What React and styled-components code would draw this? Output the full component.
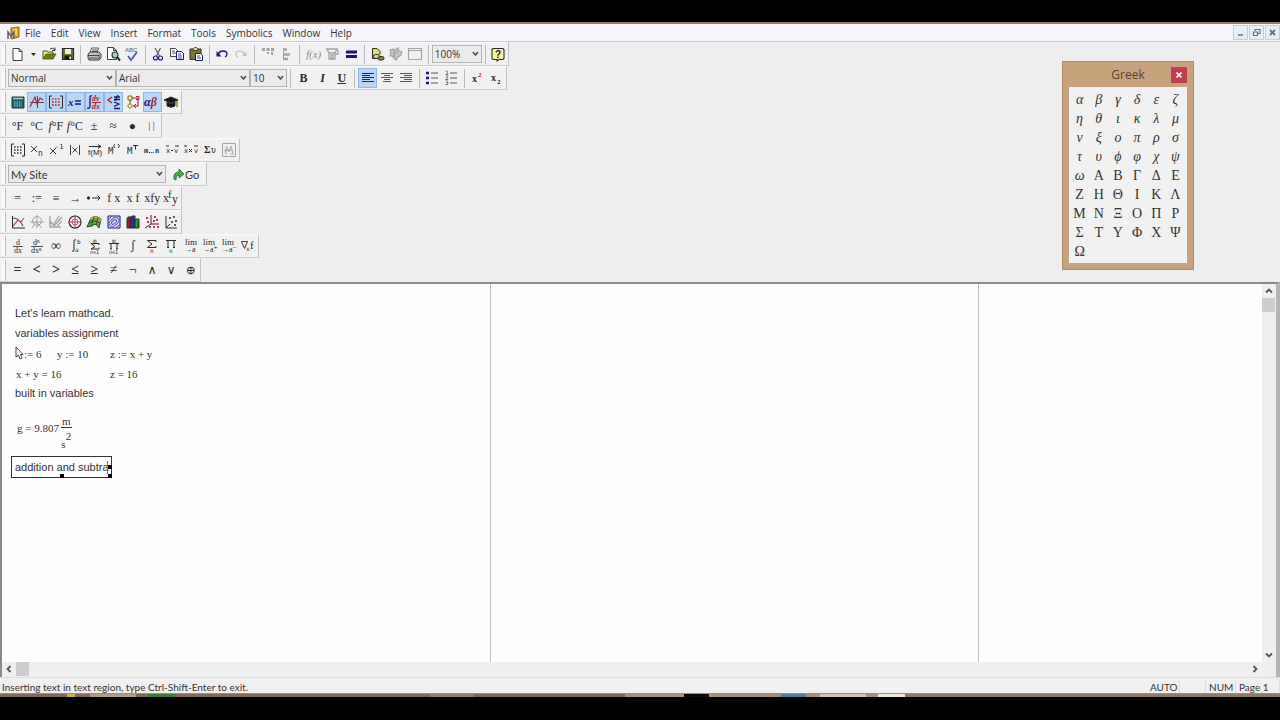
import React from "react";
import styled, { createGlobalStyle, css } from "styled-components";

const ui = `Lato, "Open Sans", sans-serif`;
const uiWide = `"Open Sans", "Noto Sans", sans-serif`;
const serif = `"Liberation Serif", "DejaVu Serif", serif`;
const sans = `"Liberation Sans", Arial, sans-serif`;
const mono = `"DejaVu Sans Mono", "Liberation Mono", monospace`;
const navy = "#15157d";
const ink = "#2a2a2a";
const red = "#b0203a";
const gray = "#a4a4a4";

const GlobalStyle = createGlobalStyle`
  * { box-sizing: border-box; }
  body { margin: 0; background: #000; font-family: ${ui}; color: #333; }
  button { margin: 0; padding: 0; border: 0; background: none; color: inherit; font: inherit; }
`;

const Screen = styled.div`
  display: flex;
  flex-direction: column;
  min-height: 100vh;
  padding: 22px 0 23px;
  background: #000;
`;

const AppWindow = styled.div`
  position: relative;
  flex: 1;
  display: flex;
  flex-direction: column;
  border-top: 2px solid #9c7b66;
  background: #eeeeef;
`;

const MenuBar = styled.nav`
  display: flex;
  align-items: center;
  height: 18px;
  padding-left: 7px;
  background: #f6f6fa;
  border-bottom: 1px solid #c9c9cc;
`;

const MenuItem = styled.button`
  padding: 0 5px;
  font-family: ${uiWide};
  font-size: 10px;
  line-height: 16px;
`;

const Caption = styled.div`
  display: flex;
  gap: 1px;
  margin-left: auto;
`;

const CaptionButton = styled.button`
  display: flex;
  align-items: center;
  justify-content: center;
  width: 15px;
  height: 15px;
  background: #e6eef7;
  border: 1px solid #c3cfdd;
`;

const Bars = styled.div`
  display: flex;
  flex-direction: column;
  align-items: flex-start;
`;

const Bar = styled.div`
  display: flex;
  align-items: center;
  width: ${(p) => p.$w}px;
  height: 24px;
  padding-left: 2px;
  background: #f1f1f1;
  border-right: 1px solid #c2c2c2;
  border-bottom: 1px solid #cdcdcd;
  border-top: 1px solid #fafafa;
  &::before {
    content: "";
    flex: none;
    width: 3px;
    height: 20px;
    margin-right: 2px;
    background: #fafafa;
    border-right: 1px solid #bdbdbd;
  }
`;

const Tool = styled.button`
  flex: ${(p) => (p.$narrow ? "0 0 12px" : "1 1 19px")};
  min-width: 0;
  height: 20px;
  display: flex;
  align-items: center;
  justify-content: center;
  color: ${ink};
  white-space: nowrap;
  ${(p) => p.$on && css`
    background: #bad6f5;
    border: 1px solid #8db6e3;
  `}
  svg { flex: none; display: block; overflow: visible; }
`;

const Sep = styled.span`
  flex: 0 0 7px;
  height: 19px;
  display: flex;
  justify-content: center;
  &::before { content: ""; border-left: 1px solid #b9b9b9; }
`;

const Combo = styled.label`
  position: relative;
  flex: none;
  display: block;
  width: ${(p) => p.$w}px;
  height: 18px;
  svg { position: absolute; right: 3px; top: 6px; pointer-events: none; }
`;

const Select = styled.select`
  appearance: none;
  width: 100%;
  height: 18px;
  margin: 0;
  padding: 0 2px;
  display: block;
  border: 1px solid #b4b4b4;
  border-radius: 0;
  background: #ebebeb;
  color: #333;
  font: ${(p) => p.$size || 10}px ${(p) => (p.$size ? ui : uiWide)};
`;

const Go = styled.button`
  display: flex;
  align-items: center;
  margin-left: 7px;
  font-size: 11px;
`;

const Glyph = styled.span`
  font-family: ${(p) => (p.$mono ? mono : serif)};
  font-size: ${(p) => p.$size || 12}px;
  font-weight: ${(p) => (p.$bold ? 700 : 400)};
  font-style: ${(p) => (p.$italic ? "italic" : "normal")};
  text-decoration: ${(p) => (p.$under ? "underline" : "none")};
  line-height: 16px;
`;

const Workspace = styled.div`
  flex: 1;
  display: grid;
  grid-template-columns: minmax(0, 1fr) 14px;
  grid-template-rows: minmax(0, 1fr) 15px;
  border: solid #8b8b8b;
  border-width: 2px 4px 0 2px;
  border-right-color: #b4b4b6;
`;

const Sheet = styled.main`
  position: relative;
  display: flex;
  overflow: hidden;
  background: #fefefe;
`;

const PageColumn = styled.div`
  flex: 0 0 ${(p) => p.$w}px;
  border-right: 1px solid #bcbcbc;
`;

const Region = styled.div`
  position: absolute;
  left: ${(p) => p.$x}px;
  top: ${(p) => p.$y}px;
  display: flex;
  align-items: center;
  white-space: pre;
  color: #333;
  font-family: ${(p) => (p.$math ? serif : sans)};
  font-size: 11px;
  line-height: 14px;
`;

const Lead = styled.span`
  padding-bottom: 10px;
`;

const Fraction = styled.span`
  display: flex;
  flex-direction: column;
  align-items: center;
  margin-left: 2px;
  line-height: 12px;
`;

const Numerator = styled.span`
  padding: 0 1px;
  border-bottom: 1px solid #333;
`;

const Denominator = styled.span`
  display: flex;
  align-items: flex-end;
  height: 22px;
`;

const Power = styled.span`
  align-self: flex-start;
  padding-top: 2px;
`;

const EditBox = styled.div`
  position: absolute;
  left: 9px;
  top: 172px;
  width: 101px;
  height: 22px;
  border: 1px solid #333;
  background: #fefefe;
`;

const EditInput = styled.input`
  display: block;
  width: 100%;
  height: 20px;
  margin: 0;
  padding: 0 0 0 3px;
  border: 0;
  outline: 0;
  background: none;
  color: #333;
  font: 11px ${sans};
`;

const Caret = styled.span`
  position: absolute;
  right: 3px;
  top: 4px;
  height: 13px;
  border-left: 1px solid #d0506c;
`;

const Handle = styled.span`
  position: absolute;
  left: ${(p) => p.$x}px;
  top: ${(p) => p.$y}px;
  width: 4px;
  height: 4px;
  background: #000;
`;

const Pointer = styled.svg`
  position: absolute;
  left: 13px;
  top: 62px;
`;

const Scroll = styled.div`
  display: flex;
  flex-direction: ${(p) => (p.$vertical ? "column" : "row")};
  justify-content: space-between;
  background: #efefef;
`;

const ScrollStart = styled.div`
  display: flex;
  flex-direction: ${(p) => (p.$vertical ? "column" : "row")};
`;

const ScrollArrow = styled.button`
  width: 14px;
  height: 14px;
  display: flex;
  align-items: center;
  justify-content: center;
`;

const Thumb = styled.div`
  width: 13px;
  height: 14px;
  background: #cdcdcd;
`;

const StatusBar = styled.footer`
  display: flex;
  align-items: center;
  height: 16px;
  padding: 2px 0 0 2px;
  border-top: 1px solid #dedede;
  background: #f0f0f0;
  font-size: 10px;
  line-height: 14px;
`;

const StatusText = styled.span`
  flex: 1;
`;

const StatusCell = styled.span`
  width: ${(p) => p.$w}px;
  height: 14px;
  padding-left: 3px;
  border-right: 1px solid #dcdcdc;
`;

const TaskStrip = styled.div`
  height: 4px;
  background: linear-gradient(90deg,
    #80695c 0 67px, #c9b24a 67px 75px, #80695c 75px 90px,
    #b09a88 90px 136px, #80695c 136px 148px, #3c7a34 148px 175px,
    #80695c 175px 430px, #8c8370 430px 474px, #806654 474px 625px,
    #a3957f 625px 684px, #0c0908 684px 709px, #a38f7c 709px 781px,
    #4f7f9f 781px 806px, #a38f7c 806px 820px, #d7c3b4 820px 866px,
    #a38f7c 866px 878px, #efe9e0 878px 905px, #8f7b68 905px);
  border-top: 1px solid #a08a78;
`;

const Palette = styled.section`
  position: absolute;
  top: 37px;
  right: 86px;
  width: 132px;
  padding: 0 6px 6px;
  background: #c8a27c;
  border: 1px solid #b08c69;
`;

const PaletteTitle = styled.header`
  display: flex;
  align-items: center;
  height: 25px;
  color: #5a4331;
`;

const PaletteName = styled.h2`
  flex: 1;
  margin: 0;
  padding-left: 16px;
  text-align: center;
  font: 400 12px ${uiWide};
`;

const CloseButton = styled.button`
  display: flex;
  align-items: center;
  justify-content: center;
  width: 16px;
  height: 16px;
  background: #bf4150;
`;

const Letters = styled.div`
  display: grid;
  grid-template-columns: repeat(6, 1fr);
  grid-auto-rows: 19px;
  padding: 3px 2px 2px 1px;
  background: #f1f1f1;
`;

const Letter = styled.button`
  font-family: ${serif};
  font-size: 14px;
  line-height: 18px;
  font-style: ${(p) => (p.$italic ? "italic" : "normal")};
  color: #333;
`;

const Svg = ({ children, w = 16, h = 16 }) => (
  <svg width={w} height={h} viewBox={`0 0 ${w} ${h}`} fill="none" stroke={ink} aria-hidden="true">
    {children}
  </svg>
);

const T = ({ x, y, s = 8, c = ink, f = mono, children, ...rest }) => (
  <text x={x} y={y} fontSize={s} fill={c} stroke="none" fontFamily={f} {...rest}>{children}</text>
);

const Chevron = () => (
  <svg width="7" height="6" viewBox="0 0 7 6" fill="none" stroke="#555" strokeWidth="1.7" aria-hidden="true">
    <path d="M1 1l2.500 3L6 1" />
  </svg>
);

const turn = { up: 180, down: 0, left: 90, right: -90 };
const ArrowMark = ({ dir }) => (
  <svg width="8" height="8" viewBox="0 0 8 8" fill="none" stroke="#555" strokeWidth="1.8" aria-hidden="true">
    <path d="M1 2.500l3 3 3-3" transform={`rotate(${turn[dir]} 4 4)`} />
  </svg>
);

const I = {
  fresh: <Svg><path d="M3 2.500h6l3 3v9H3zM9 2.500v3h3" fill="#fff" strokeWidth=".9" /></Svg>,
  drop: <Svg w={7} h={5}><path d="M1 1h5L3.500 4z" fill={ink} stroke="none" /></Svg>,
  open: <Svg><path d="M2 13V5h4l1 1h5v2" fill="#eded75" strokeWidth=".8" /><path d="M2 13l3-5h10l-3 5z" fill="#767a12" stroke="#4d5010" strokeWidth=".8" /><path d="M9 3q3-2 5 1M14 1.500v3h-3" strokeWidth=".9" /></Svg>,
  save: <Svg><path d="M2.500 2.500h11v11h-11z" fill="#6f7422" strokeWidth="1.200" /><path d="M5 3h6v5H5z" fill="#ececdc" stroke="none" /><path d="M4.500 9.500h7v4h-7z" fill="#161616" stroke="none" /><path d="M9.500 10.500h1.500v2.500H9.500z" fill="#fff" stroke="none" /></Svg>,
  print: <Svg><path d="M4 7l1.500-5h7L11 7" fill="#fff" strokeWidth=".8" /><path d="M2 8l2-2h9l2 2v4l-2 2H3l-1-2z" fill="#c3c3bd" strokeWidth=".9" /><path d="M2 9.500h11M3 12h9M13 8.500V13M6 4h5M6 5.500h5" strokeWidth=".8" /><path d="M9 11h2" stroke="#c8c030" /></Svg>,
  preview: <Svg><path d="M2.500 1.500h6l3 3v9h-9zM8.500 1.500v3h3" fill="#fff" strokeWidth=".9" /><circle cx="10" cy="9" r="3" fill="#9fd2d6" strokeWidth="1.100" /><path d="M12 11l3 3.500" strokeWidth="2" /></Svg>,
  spell: <Svg><T x={1} y={6} s={6} f={sans} c="#555">ABC</T><path d="M4 10l3 4 6-8" stroke="#5654ad" strokeWidth="1.800" /></Svg>,
  cut: <Svg><path d="M5 2l4.500 8M10.500 2L6.500 10" strokeWidth="1.100" stroke="#555" /><circle cx="5.500" cy="12" r="2" stroke={navy} strokeWidth="1.100" /><circle cx="10.500" cy="12" r="2" stroke={navy} strokeWidth="1.100" /></Svg>,
  copy: <Svg><path d="M1.500 2.500h5l2 2v6h-7z" fill="#fff" strokeWidth=".9" /><path d="M3 5h3M3 7h4" strokeWidth=".8" /><path d="M7.500 5.500h5l2 2v6h-7z" fill="#fff" stroke={navy} /><path d="M9 8h3M9 10h4M9 12h4" stroke={navy} strokeWidth=".8" /></Svg>,
  paste: <Svg><path d="M2 3h11v10.500H2z" fill="#77772e" strokeWidth="1" /><path d="M5 4.500V3l1.500-1.500h2L10 3v1.500z" fill="#dede78" strokeWidth=".8" /><path d="M7.500 7.500h5l2 2v5h-7z" fill="#fff" stroke={navy} /><path d="M9 10h3M9 12h4" stroke={navy} strokeWidth=".8" /></Svg>,
  undo: <Svg><path d="M4 9q1-4 5-4 4 0 4 3 0 2-2 3" stroke={navy} strokeWidth="1.300" /><path d="M2.500 5v5.500h5z" fill={navy} stroke="none" /></Svg>,
  redo: <Svg><path d="M11.500 9q-1-4-5-4-3.500 0-3.500 3 0 2 2 3" stroke="#bdbdbd" strokeWidth="1.200" /><path d="M13.500 5.500V10H9z" fill="#bdbdbd" stroke="none" /></Svg>,
  alignTop: <Svg><path d="M2 3.500h3M6.500 3.500h3M11 3.500h3" stroke={gray} strokeWidth="3" /><path d="M7 7h2M12 6v3" stroke={gray} strokeWidth="2" /></Svg>,
  alignLeft: <Svg><path d="M4 3.500h4M4 8.500h7M4 13h5" stroke={gray} strokeWidth="2.600" /><path d="M4.500 2v12" stroke={gray} /></Svg>,
  func: <Svg><T x={1} y={12} s={11} f={serif} c="#8d8d8d" fontStyle="italic">f(x)</T></Svg>,
  unit: <Svg><path d="M2 3h12M3 3l2 4h6l2-4M5 7v6h6V6M11 8h3V4M7 9h2v3H7z" stroke={gray} strokeWidth="1.300" /></Svg>,
  calc: <Svg><path d="M3 6h11M3 10.500h11" stroke={navy} strokeWidth="3" /></Svg>,
  link: <Svg><path d="M3.500 12.500v-10H8l3 3v3" fill="#e4e65b" /><path d="M3.500 12.500h4" /><rect x="4.500" y="8.500" width="6" height="4" rx="2" fill="#d9da78" /><rect x="9" y="10.500" width="6" height="3.500" rx="1.700" fill="#86872b" /></Svg>,
  component: <Svg><path d="M2 4l3-1 2 1 3-2 1 3 3 1-1 3-3 2-2 3-2-2-2-2H2l1-3z" fill="#c4c4c4" stroke={gray} strokeWidth="1.200" /><path d="M6 4v7M10 5l-5 4" stroke="#999" /></Svg>,
  pane: <Svg><path d="M1.500 2.500h13v11h-13zM1.500 4.500h13" stroke={gray} strokeWidth="1.200" /></Svg>,
  help: <Svg><path d="M3 2.500h10l1 1v9l-1 1H9L7 15v-1.500H3l-1-1v-9z" fill="#f7f5a0" strokeWidth="1.100" /><T x={5} y={12} s={10} f={sans} fontWeight="700" c="#222">?</T></Svg>,
  left: <Svg><path d="M2 3.500h12M2 5.500h8M2 7.500h12M2 9.500h8M2 11.500h12" /></Svg>,
  center: <Svg><path d="M2 3.500h12M5 5.500h6M2 7.500h12M5 9.500h6M4 11.500h8" stroke="#555" /></Svg>,
  right: <Svg><path d="M2 3.500h12M6 5.500h8M2 7.500h12M6 9.500h8M2 11.500h12" stroke="#555" /></Svg>,
  bullets: <Svg><path d="M2 3h3M2 8h3M2 13h3" stroke={navy} strokeWidth="2.600" /><path d="M7 3h7M7 8h7M7 13h7" stroke="#555" /></Svg>,
  numbers: <Svg><T x={2} y={5} s={6} c={navy}>1</T><T x={2} y={10} s={6} c={navy}>2</T><T x={2} y={15} s={6} c={navy}>3</T><path d="M7 3h7M7 8h7M7 13h7" stroke="#555" /></Svg>,
  sup: <Svg><T x={3} y={12} s={10} f={serif} fontWeight="700">x</T><T x={9} y={7} s={7} f={serif} fontWeight="700" c={red}>2</T></Svg>,
  sub: <Svg><T x={3} y={11} s={10} f={serif} fontWeight="700">x</T><T x={9} y={14} s={7} f={serif} fontWeight="700" c={navy}>2</T></Svg>,
  calculator: <Svg><path d="M2 3h12v11H2z" fill="#176069" stroke="#163c42" /><path d="M3 4.500h10" stroke="#9bd5cb" strokeWidth="1.500" /><path d="M4 8h8M4 10h8M4 12h8" stroke="#b7e0dc" strokeDasharray="1.500 1" strokeWidth=".9" /></Svg>,
  graph: <Svg><path d="M1 8.500h14M8.500 2v12" strokeWidth=".8" /><path d="M1 13L6 3l2 7 3-6 3 2" stroke={red} strokeWidth="1.100" /></Svg>,
  matrix: <Svg><path d="M4 2H1.500v12H4M12 2h2.500v12H12" /><path d="M4 5h8M4 8h8M4 11h8" stroke={red} strokeWidth="1.600" strokeDasharray="1.600 1.400" /></Svg>,
  matrixInk: <Svg><path d="M4 2H1.500v12H4M12 2h2.500v12H12" /><path d="M4 5h8M4 8h8M4 11h8" strokeWidth="1.300" strokeDasharray="1.500 1.500" /></Svg>,
  xeq: <Svg><T x={1} y={12} s={11} f={serif} fontWeight="700" fontStyle="italic" c={navy}>x</T><path d="M8 7h6M8 10h6" stroke={navy} strokeWidth="1.600" /></Svg>,
  calculus: <Svg><path d="M6 2q-2-1-2 2v8q0 3-3 2" stroke={navy} strokeWidth="1.300" /><T x={6} y={7} s={8} f={serif} fontStyle="italic" fontWeight="700" c={red}>dy</T><path d="M6 8.500h9" stroke={red} /><T x={6} y={15} s={8} f={serif} fontStyle="italic" fontWeight="700" c={red}>dx</T></Svg>,
  bool: <Svg><path d="M6 3L2 6l4 3" stroke={red} strokeWidth="1.400" /><path d="M8 3h6M8 5.500h6M12 1l-3 6M8 8l5 2-5 2.500M8 14.500h6" stroke={navy} strokeWidth="1.300" /></Svg>,
  program: <Svg><path d="M5 6v4M7 4h6M8 12h5V4" stroke={red} strokeWidth="1.100" /><path d="M5 9.500l2.500 2.500L5 14.500 2.500 12z" stroke="#726f24" fill="#eeedb6" /><path d="M3 2h4v4H3z" stroke="#726f24" fill="#eeedb6" /><path d="M11 2.500h3v3h-3M11 10l-2 2 2 2" stroke={red} /></Svg>,
  greek: <Svg><T x={0} y={12} s={12} f={serif} fontStyle="italic" fontWeight="700" c={navy}>α<tspan fill={red}>β</tspan></T></Svg>,
  hat: <Svg><path d="M1 6l7-3 7 3-7 3z" fill="#141414" /><path d="M4 8v4q4 2.500 8 0V8L8 10z" fill="#141414" /><path d="M14 7v6" stroke="#85852e" strokeWidth="1.500" /></Svg>,
  go: <Svg w={12} h={14}><path d="M1 12Q0 5 6 5V2l5 5-5 4V8Q3 8 3 13z" fill="#43ae46" stroke="#206428" strokeWidth=".8" /></Svg>,
  xn: <Svg><path d="M2 4l6 6M8 4l-6 6" strokeWidth=".9" /><T x={9} y={14} s={8}>n</T></Svg>,
  inv: <Svg><path d="M2 6l6 6M8 6l-6 6" strokeWidth=".9" /><T x={7} y={7} s={7}>-1</T></Svg>,
  abs: <Svg><path d="M3.500 3v10M12.500 3v10M5.500 5.500l5 5M10.500 5.500l-5 5" strokeWidth=".9" /></Svg>,
  vec: <Svg><path d="M2 4.500h12M11 2.500l3 2-3 2" /><T x={1} y={13} s={8} f={sans}>f(M)</T></Svg>,
  mcol: <Svg><T x={2} y={12} s={9}>M</T><path d="M9 2L7.500 4 9 6M12 2l1.500 2L12 6" strokeWidth=".9" /></Svg>,
  mt: <Svg><T x={2} y={12} s={9}>M</T><path d="M8 3.500h5M10.500 3.500v4" /></Svg>,
  range: <Svg><T x={0} y={11} s={7} fontWeight="700">m</T><T x={11} y={11} s={7} fontWeight="700">n</T><path d="M5 10.500h5" strokeDasharray="1.200 1" /></Svg>,
  dot: <Svg><T x={2} y={11} s={7}>x</T><T x={10} y={11} s={7}>v</T><path d="M7 8.500h2M2 4h3M11 4h4" strokeWidth="1.200" /></Svg>,
  cross: <Svg><T x={1} y={11} s={7}>x</T><T x={11} y={11} s={7}>v</T><path d="M6 7l3 3M9 7l-3 3M1 4h3M11 4h4" /></Svg>,
  sumv: <Svg><T x={2} y={11} s={10} f={serif} fontWeight="700">Σ</T><T x={9} y={11} s={8}>υ</T></Svg>,
  picture: <Svg><path d="M1.500 1.500h13v13h-13z" stroke={gray} /><path d="M4 11l2-5 2 4 2-6 2 8M4 5h3M9 12h4M3 8h9M5 13V8" stroke={gray} strokeWidth=".9" /></Svg>,
  evalRight: <Svg><path d="M6 8h8M11.500 5.500L14 8l-2.500 2.500" /><circle cx="2.500" cy="8" r="1.200" fill={ink} /></Svg>,
  tree: <Svg><T x={0} y={12} s={12} f={serif}>x</T><T x={5} y={8} s={11} f={serif}>f</T><T x={9} y={13} s={12} f={serif}>y</T></Svg>,
  xyplot: <Svg><path d="M2.500 2v12H15" /><path d="M3 4q6 0 10 8" stroke="#4749bd" strokeWidth="1.200" /><path d="M3 12l5-6 3 2 3-4" stroke="#c04a62" strokeWidth="1.200" /></Svg>,
  zoomplot: <Svg><circle cx="8" cy="7" r="4.500" stroke={gray} /><path d="M1 8h14M8 1v13M3 14l4-6 6 6" stroke={gray} /></Svg>,
  trace: <Svg><path d="M2 2v11h11M2 7l3 4 3-4 3-5M6 12l8-9M9 12l5-5" stroke={gray} strokeWidth="1.300" /></Svg>,
  polar: <Svg><circle cx="8" cy="8" r="6" strokeWidth="1.100" /><circle cx="8" cy="8" r="3" stroke={red} strokeWidth=".7" /><path d="M1 8h14M8 1v14" stroke={red} strokeWidth=".8" /></Svg>,
  surface: <Svg><path d="M1 13l4-9q5-3 10 1l-2 9q-3-6-7-2z" fill="#45b344" strokeWidth=".9" /><path d="M5 4q5-3 10 1l-1 3q-4-4-10-1z" fill="#d9ce3a" stroke="none" /><path d="M3 9q5-4 11 0M4 7q5-4 10-1M8 3L5 12M12 3l-2 8" strokeWidth=".7" /></Svg>,
  contour: <Svg><path d="M2 2h12v12H2z" stroke={navy} fill="#dcdcf2" /><ellipse cx="8" cy="8" rx="5.500" ry="3.500" transform="rotate(-40 8 8)" stroke="#5355b5" /><ellipse cx="8" cy="8" rx="3" ry="1.600" transform="rotate(-40 8 8)" stroke="#5355b5" /><path d="M2 6l4-4M10 14l4-4" stroke="#5355b5" /></Svg>,
  bars3d: <Svg><path d="M2 5l1-2h3v11H2z" fill="#992334" /><path d="M6 4l1-2h3v12H6z" fill="#2837a9" /><path d="M10 7l1-2h3v9h-4z" fill="#27a33b" /><path d="M5 5v9M9 4v10M13 7v7" strokeWidth=".8" /></Svg>,
  scatter: <Svg><path d="M7 1v9h8M7 10l-6 4" /><path d="M2 4h2M10 3h2M12 6h2M3 8h2M9 7h2M9 13h2M13 13h2M5 13h2" stroke="#cf3148" strokeWidth="2" /></Svg>,
  plot3d: <Svg><path d="M3 2v12h11M3 14l4-4" /><path d="M6 4h2M10 3h2M8 8h2M12 7h2M11 11h2" strokeWidth="1.700" /></Svg>,
  deriv: <Svg><T x={6} y={7} s={8} f={serif}>d</T><path d="M3 8.500h10" strokeWidth=".8" /><T x={4} y={15} s={8} f={serif}>dx</T></Svg>,
  nderiv: <Svg><T x={4} y={7} s={8} f={serif}>dⁿ</T><path d="M2 8.500h12" strokeWidth=".8" /><T x={2} y={15} s={8} f={serif}>dxⁿ</T></Svg>,
  defint: <Svg><path d="M9 2q-2-1-2 1v9q0 2-2 1" /><T x={10} y={6} s={6}>b</T><T x={8} y={14} s={6}>a</T></Svg>,
  sumn: <Svg><T x={6} y={5} s={6}>m</T><path d="M12 7V5.500H4L8 8.500 4 11h8V9.500" /><T x={3} y={16} s={5}>n=1</T></Svg>,
  prodn: <Svg><T x={6} y={5} s={6}>m</T><path d="M3 5.500h10M5 5v6M11 5v6M4 11h2M10 11h2" /><T x={3} y={16} s={5}>n=1</T></Svg>,
  integral: <Svg><path d="M10.500 3Q8 1 8 5v6q0 4-2.500 2" /></Svg>,
  sum: <Svg><path d="M12 4V2.500H3.500L8 6 3.500 9.500H12V8" /><T x={6} y={15} s={6}>n</T></Svg>,
  prod: <Svg><path d="M3 2.500h10M5 2v7.500M11 2v7.500M4 9.500h2M10 9.500h2" /><T x={6} y={15} s={6}>n</T></Svg>,
  lim: <Svg><T x={2} y={7} s={9} f={serif}>lim</T><T x={1} y={14} s={8} f={serif}>→a</T></Svg>,
  limp: <Svg w={18}><T x={2} y={7} s={9} f={serif}>lim</T><T x={1} y={14} s={8} f={serif}>→a⁺</T></Svg>,
  limm: <Svg w={18}><T x={2} y={7} s={9} f={serif}>lim</T><T x={1} y={14} s={8} f={serif}>→a⁻</T></Svg>,
  nabla: <Svg><path d="M1.500 3.500h6l-3 7z" strokeWidth=".9" /><T x={6} y={13} s={6}>x</T><T x={10} y={11} s={11} f={serif}>f</T></Svg>,
};

const g = (text, props = {}) => <Glyph {...props}>{text}</Glyph>;

const mathBar = [
  [I.calculator, 0, "Calculator"], [I.graph, 1, "Graph"], [I.matrix, 1, "Matrix"], [I.xeq, 1, "Evaluation"],
  [I.calculus, 1, "Calculus"], [I.bool, 1, "Boolean"], [I.program, 0, "Programming"], [I.greek, 1, "Greek"], [I.hat, 0, "Symbolic"],
];

const palettes = [
  { w: 162, items: [g("°F"), g("°C"), <Glyph><i>f</i>°F</Glyph>, <Glyph><i>f</i>°C</Glyph>, g("±", { $size: 13 }), g("≈", { $size: 13 }), g("●", { $size: 12 }), g("| |", { $size: 10 })] },
  { w: 240, items: [I.matrixInk, I.xn, I.inv, I.abs, I.vec, I.mcol, I.mt, I.range, I.dot, I.cross, I.sumv, I.picture] },
];

const lowerPalettes = [
  { w: 182, items: [g("="), g(":="), g("≡"), g("→"), I.evalRight, g("f x"), g("x f"), g("xfy"), I.tree] },
  { w: 182, items: [I.xyplot, I.zoomplot, I.trace, I.polar, I.surface, I.contour, I.bars3d, I.scatter, I.plot3d] },
  { w: 259, items: [I.deriv, I.nderiv, g("∞", { $size: 14 }), I.defint, I.sumn, I.prodn, I.integral, I.sum, I.prod, I.lim, I.limp, I.limm, I.nabla] },
  { w: 201, items: ["=", "<", ">", "≤", "≥", "≠", "¬", "∧", "∨", "⊕"].map((t, i) => g(t, { $size: i < 7 ? 14 : 12, $bold: i < 5 })) },
];

const greek = "αβγδεζηθικλμνξοπρστυϕφχψωΑΒΓΔΕΖΗΘΙΚΛΜΝΞΟΠΡΣΤΥΦΧΨΩ".split("");
const menus = ["File", "Edit", "View", "Insert", "Format", "Tools", "Symbolics", "Window", "Help"];

const Dropdown = ({ label, value, w, size }) => (
  <Combo $w={w}>
    <Select aria-label={label} defaultValue={value} $size={size}><option>{value}</option></Select>
    <Chevron />
  </Combo>
);

const Tools = ({ names }) => names.map((name, i) =>
  name === "|" ? <Sep key={i} /> : <Tool key={i} $narrow={name === "drop"} $on={name === "left"} aria-label={name}>{I[name]}</Tool>
);

const PaletteBar = ({ w, items }) => (
  <Bar $w={w}>{items.map((item, i) => <Tool key={i}>{item}</Tool>)}</Bar>
);

export default function App() {
  return (
    <Screen>
      <GlobalStyle />
      <AppWindow>
        <MenuBar>
          <svg width="13" height="14" viewBox="0 0 13 14" aria-hidden="true">
            <path d="M4 2l8-1v10l-8 2z" fill="#e7a51d" stroke="#6e4a10" strokeWidth=".8" />
            <path d="M6 3l4-1v7l-4 1z" fill="#f8d44c" />
            <path d="M1 13V6l3 4 3-4v7" fill="none" stroke="#5f6068" strokeWidth="1.500" />
          </svg>
          {menus.map((m) => <MenuItem key={m}>{m}</MenuItem>)}
          <Caption>
            <CaptionButton aria-label="Minimize"><Svg w={9} h={9}><path d="M2 7h5" stroke="#68727d" strokeWidth="1.500" /></Svg></CaptionButton>
            <CaptionButton aria-label="Restore"><Svg w={9} h={9}><path d="M3 3V1.500h5v4H6M1.500 4h4v3.500h-4z" stroke="#68727d" strokeWidth="1.200" /></Svg></CaptionButton>
            <CaptionButton aria-label="Close"><Svg w={9} h={9}><path d="M2 2l5 5M7 2L2 7" stroke="#68727d" strokeWidth="1.800" /></Svg></CaptionButton>
          </Caption>
        </MenuBar>

        <Bars>
          <Bar $w={509}>
            <Tools names={["fresh", "drop", "open", "save", "|", "print", "preview", "spell", "|", "cut", "copy", "paste", "|", "undo", "redo", "|", "alignTop", "alignLeft", "|", "func", "unit", "calc", "|", "link", "component", "pane", "|"]} />
            <Dropdown label="Zoom" value="100%" w={50} />
            <Tools names={["|", "help"]} />
          </Bar>
          <Bar $w={507}>
            <Dropdown label="Style" value="Normal" w={108} />
            <Dropdown label="Font" value="Arial" w={134} />
            <Dropdown label="Font size" value="10" w={37} />
            <Sep />
            <Tool aria-label="Bold">{g("B", { $bold: true })}</Tool>
            <Tool aria-label="Italic">{g("I", { $bold: true, $italic: true })}</Tool>
            <Tool aria-label="Underline">{g("U", { $bold: true, $under: true })}</Tool>
            <Tools names={["|", "left", "center", "right", "|", "bullets", "numbers", "|", "sup", "sub"]} />
          </Bar>
          <Bar $w={182}>
            {mathBar.map(([icon, on, name]) => <Tool key={name} $on={on} aria-label={name}>{icon}</Tool>)}
          </Bar>
          {palettes.map((p, i) => <PaletteBar key={i} {...p} />)}
          <Bar $w={207}>
            <Dropdown label="Site" value="My Site" w={158} size={11} />
            <Go>{I.go}Go</Go>
          </Bar>
          {lowerPalettes.map((p, i) => <PaletteBar key={i} {...p} />)}
        </Bars>

        <Workspace>
          <Sheet>
            <PageColumn $w={489} />
            <PageColumn $w={488} />
            <Region $x={13} $y={22}>Let's learn mathcad.</Region>
            <Region $x={13} $y={42}>variables assignment</Region>
            <Region $x={22} $y={63} $math>:= 6</Region>
            <Region $x={55} $y={63} $math>y := 10</Region>
            <Region $x={108} $y={63} $math>z := x + y</Region>
            <Region $x={14} $y={83} $math>x + y = 16</Region>
            <Region $x={108} $y={83} $math>z = 16</Region>
            <Region $x={13} $y={102}>built in variables</Region>
            <Region $x={15} $y={131} $math>
              <Lead>g = 9.807</Lead>
              <Fraction>
                <Numerator>m</Numerator>
                <Denominator>s<Power>2</Power></Denominator>
              </Fraction>
            </Region>
            <EditBox>
              <EditInput aria-label="Text region" defaultValue="addition and subtra" />
              <Caret />
              <Handle $x={96} $y={8} />
              <Handle $x={48} $y={17} />
              <Handle $x={96} $y={17} />
            </EditBox>
            <Pointer width="9" height="14" viewBox="0 0 9 14" aria-hidden="true">
              <path d="M1 1v10l2.500-2 1.500 4 2-1-1.500-3.500H8z" fill="#fff" stroke="#333" strokeWidth=".9" />
            </Pointer>
          </Sheet>
          <Scroll $vertical>
            <ScrollStart $vertical>
              <ScrollArrow aria-label="Scroll up"><ArrowMark dir="up" /></ScrollArrow>
              <Thumb />
            </ScrollStart>
            <ScrollArrow aria-label="Scroll down"><ArrowMark dir="down" /></ScrollArrow>
          </Scroll>
          <Scroll>
            <ScrollStart>
              <ScrollArrow aria-label="Scroll left"><ArrowMark dir="left" /></ScrollArrow>
              <Thumb />
            </ScrollStart>
            <ScrollArrow aria-label="Scroll right"><ArrowMark dir="right" /></ScrollArrow>
          </Scroll>
        </Workspace>

        <StatusBar>
          <StatusText>Inserting text in text region, type Ctrl-Shift-Enter to exit.</StatusText>
          <StatusCell $w={33}>AUTO</StatusCell>
          <StatusCell $w={26} />
          <StatusCell $w={30}>NUM</StatusCell>
          <StatusCell $w={44}>Page 1</StatusCell>
        </StatusBar>
        <TaskStrip />

        <Palette aria-label="Greek symbols">
          <PaletteTitle>
            <PaletteName>Greek</PaletteName>
            <CloseButton aria-label="Close palette"><Svg w={8} h={8}><path d="M1.500 1.500l5 5M6.500 1.500l-5 5" stroke="#fff" strokeWidth="1.700" /></Svg></CloseButton>
          </PaletteTitle>
          <Letters>
            {greek.map((c, i) => <Letter key={i} $italic={i < 25}>{c}</Letter>)}
          </Letters>
        </Palette>
      </AppWindow>
    </Screen>
  );
}
